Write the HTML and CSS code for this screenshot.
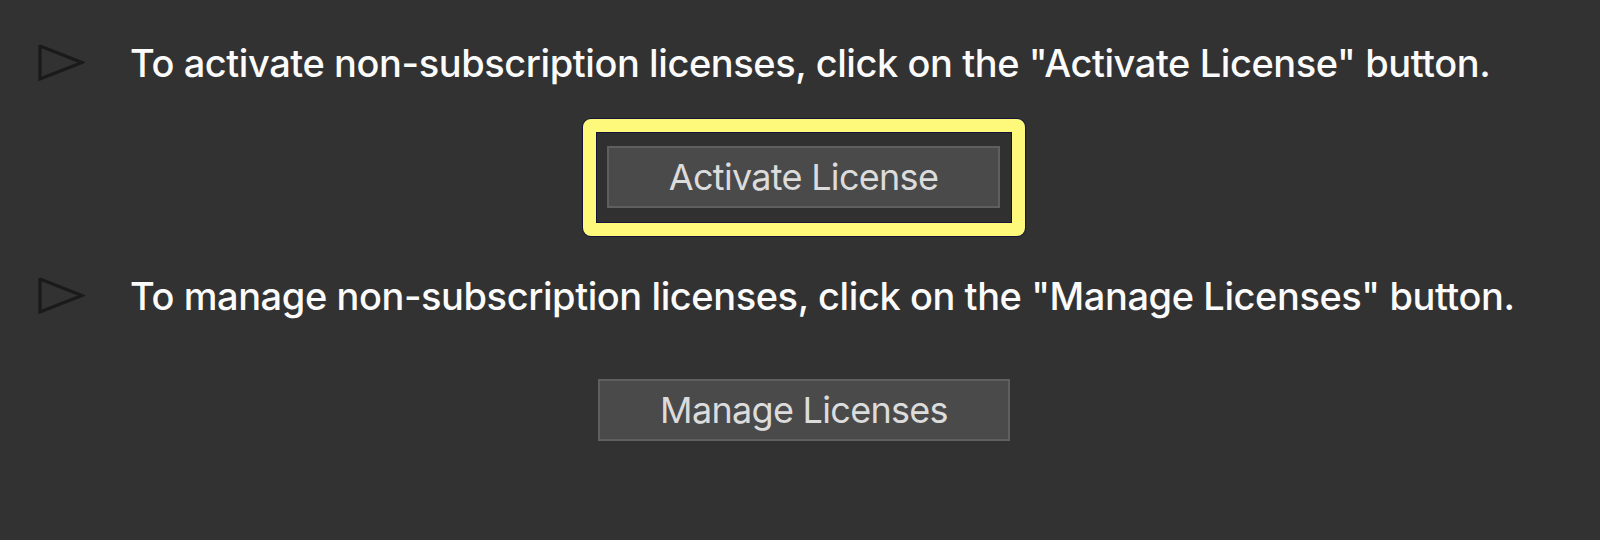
FILE: index.html
```html
<!DOCTYPE html>
<html lang="en">
<head>
<meta charset="utf-8">
<title>Licenses</title>
<link rel="stylesheet" href="styles.css">
</head>
<body>
<main class="panel">
  <div class="note">
    <span class="note-icon">
      <svg width="48" height="40" viewBox="0 0 48 40"><polyline points="3,3 45,19.5 3,36 3,2" /></svg>
    </span>
    <p class="note-text">To activate non-subscription licenses, click on the "Activate License" button.</p>
  </div>
  <div class="action action-first">
    <div class="highlight">
      <div class="btn">Activate License</div>
    </div>
  </div>
  <div class="note note-second">
    <span class="note-icon">
      <svg width="48" height="40" viewBox="0 0 48 40"><polyline points="3,3 45,19.5 3,36 3,2" /></svg>
    </span>
    <p class="note-text">To manage non-subscription licenses, click on the "Manage Licenses" button.</p>
  </div>
  <div class="action action-second">
    <div class="btn">Manage Licenses</div>
  </div>
</main>
</body>
</html>
```
FILE: styles.css
```css
html, body {
  margin: 0;
  padding: 0;
}
body {
  width: 1600px;
  height: 540px;
  overflow: hidden;
  background: #323232;
  font-family: Inter, "Liberation Sans", Arial, sans-serif;
}
.panel {
  padding-top: 41px;
}
.note {
  display: flex;
  align-items: center;
  height: 44px;
}
.note-icon {
  flex: none;
  width: 130px;
  display: flex;
  align-items: center;
}
.note-icon svg {
  margin-left: 37px;
  display: block;
}
.note-icon polyline {
  fill: none;
  stroke: #1a1a1a;
  stroke-width: 3.2;
  stroke-linejoin: miter;
}
.note-text {
  margin: 0;
  font-size: 38px;
  font-weight: 500;
  line-height: 44px;
  letter-spacing: -0.42px;
  color: #fbfbfb;
  white-space: nowrap;
}
.note-second {
  margin-top: 38px;
}
.action {
  display: flex;
  justify-content: center;
  padding-left: 8px;
}
.action-first {
  margin-top: 34px;
}
.action-second {
  margin-top: 61px;
}
.highlight {
  border: 13px solid #fef97a;
  border-radius: 8px;
  background: #303030;
  padding: 14px 12px 15px 11px;
  box-shadow: 0 0 0 1px #14143a, inset 0 0 0 1px #14143a;
}
.btn {
  box-sizing: border-box;
  height: 62px;
  display: flex;
  align-items: center;
  padding: 0 60px;
  background: #4a4a4a;
  border: 2px solid #5f5f5f;
  color: #dcdcdc;
  font-size: 36px;
  font-weight: 400;
  letter-spacing: -0.7px;
  white-space: nowrap;
}
```
